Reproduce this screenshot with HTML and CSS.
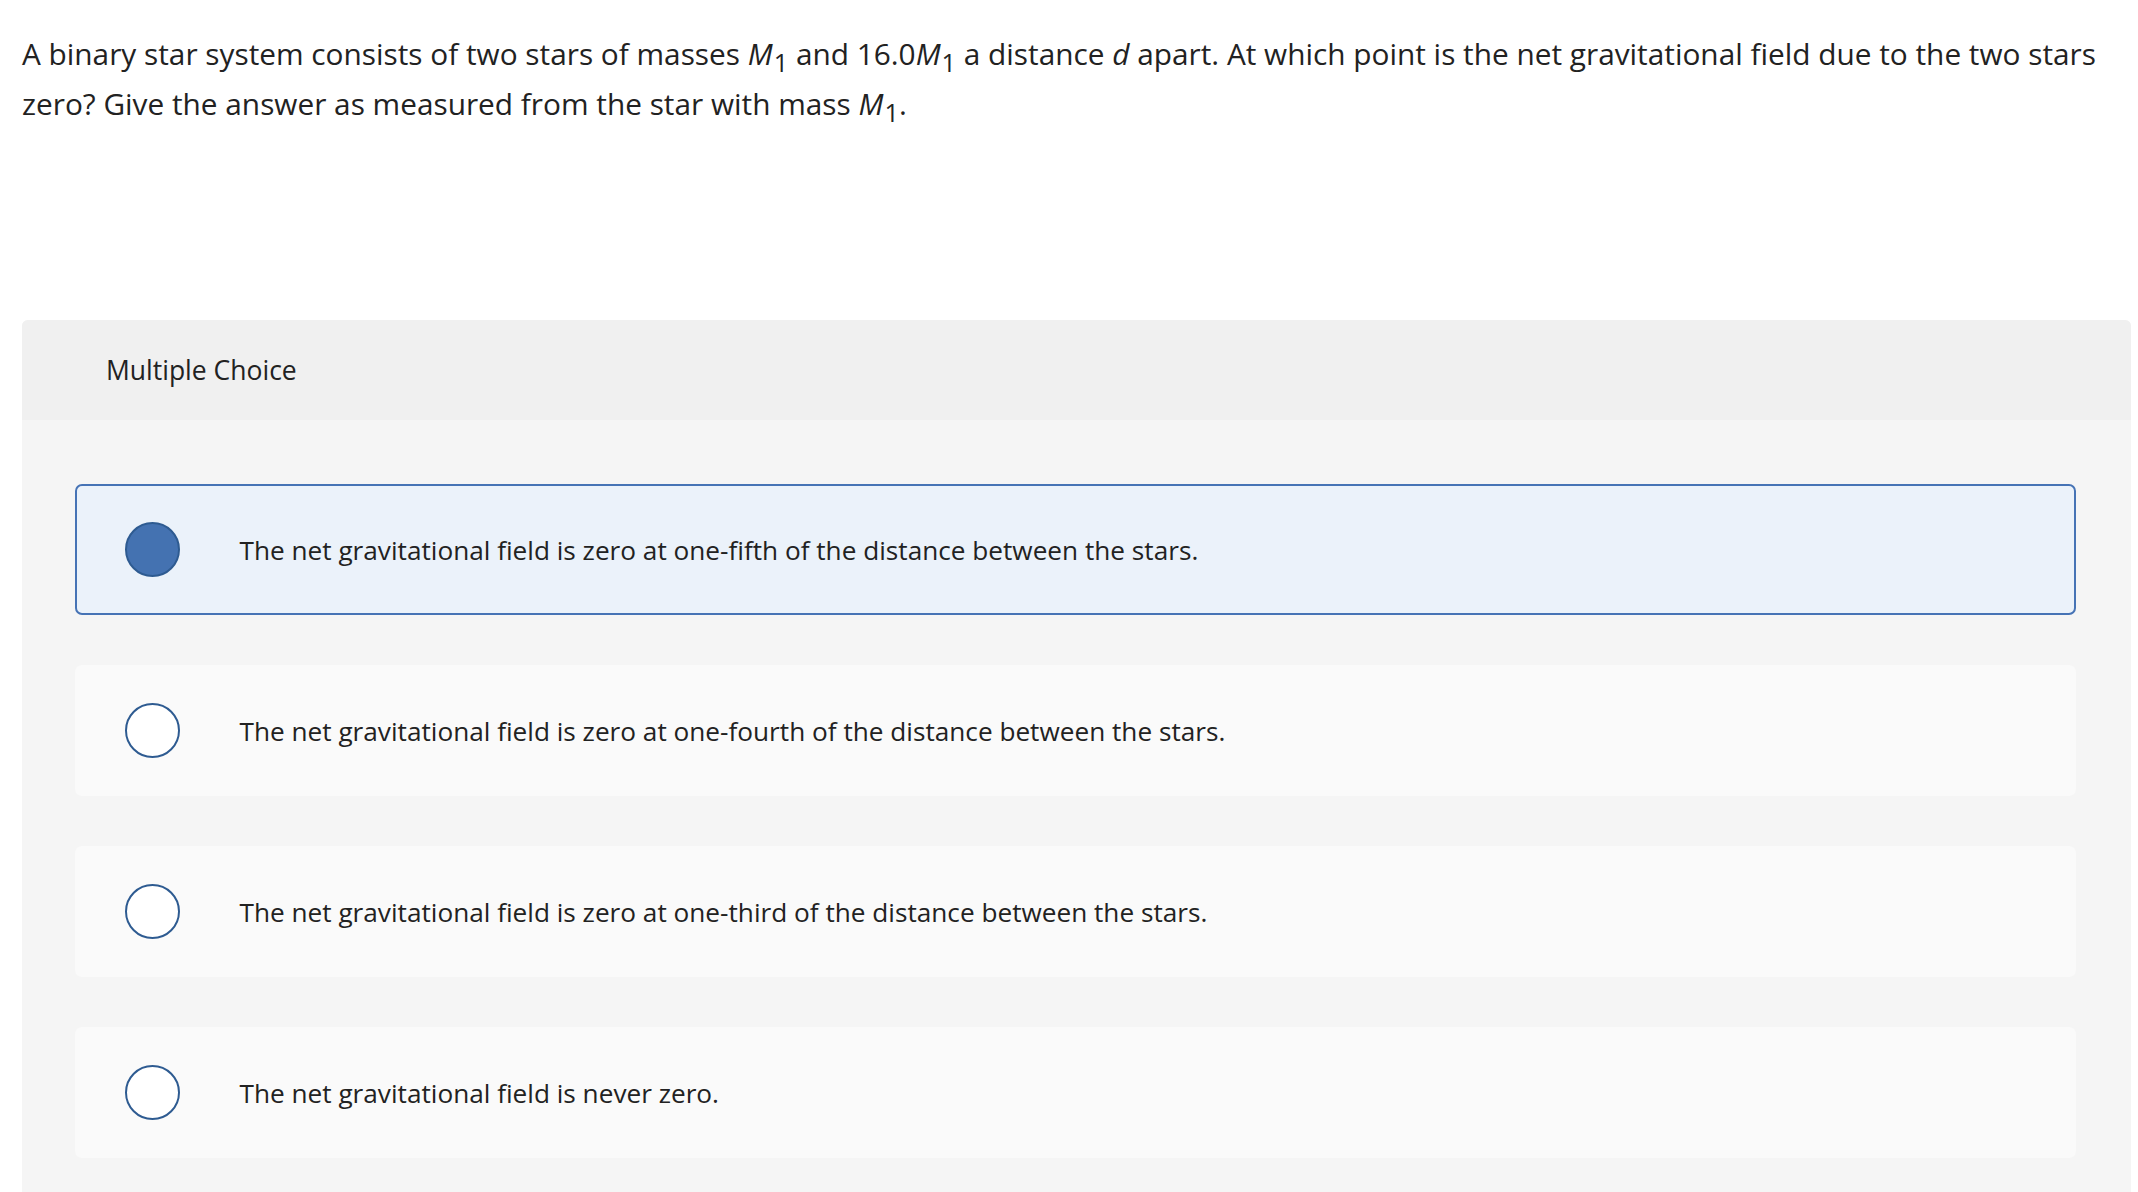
FILE: index.html
```html
<!DOCTYPE html>
<html lang="en">
<head>
<meta charset="utf-8">
<title>Multiple Choice</title>
<link rel="stylesheet" href="styles.css">
</head>
<body>
<main class="page">
  <p class="question">A binary star system consists of two stars of masses <span class="math"><i>M</i><sub>1</sub></span> and 16.0<span class="math"><i>M</i><sub>1</sub></span> a distance <i class="var">d</i> apart. At which point is the net gravitational field due to the two stars zero? Give the answer as measured from the star with mass <span class="math"><i>M</i><sub>1</sub></span>.</p>

  <section class="panel">
    <header class="panel-head">Multiple Choice</header>
    <div class="panel-body">
      <div class="option selected">
        <span class="radio"></span>
        <span class="label">The net gravitational field is zero at one-fifth of the distance between the stars.</span>
      </div>
      <div class="option">
        <span class="radio"></span>
        <span class="label">The net gravitational field is zero at one-fourth of the distance between the stars.</span>
      </div>
      <div class="option">
        <span class="radio"></span>
        <span class="label">The net gravitational field is zero at one-third of the distance between the stars.</span>
      </div>
      <div class="option">
        <span class="radio"></span>
        <span class="label">The net gravitational field is never zero.</span>
      </div>
    </div>
  </section>
</main>
</body>
</html>
```

FILE: styles.css
```css
html, body {
  margin: 0;
  padding: 0;
  background: #ffffff;
}

body {
  font-family: "Open Sans", "Lato", sans-serif;
  color: #222222;
}

.page {
  padding: 0 7px 0 22px;
}

.question {
  margin: 29px 0 0 0;
  font-size: 29.8px;
  line-height: 50px;
  max-width: 2100px;
}

.math i,
.var {
  font-style: italic;
}

.math sub {
  font-size: 0.85em;
  vertical-align: -0.28em;
  line-height: 0;
  margin-left: 1px;
}

.panel {
  margin-top: 191px;
  border-radius: 6px 6px 0 0;
  overflow: hidden;
  background: #f5f5f5;
}

.panel-head {
  height: 100px;
  display: flex;
  align-items: center;
  padding-left: 84px;
  background: #f0f0f0;
  font-size: 26.5px;
}

.panel-body {
  padding: 64px 55px 34px 53px;
  display: flex;
  flex-direction: column;
  gap: 50px;
}

.option {
  height: 131px;
  box-sizing: border-box;
  display: flex;
  align-items: center;
  padding-left: 47.5px;
  background: #fafafa;
  border: 2px solid transparent;
  border-radius: 7px;
}

.option.selected {
  background: #ebf2fa;
  border-color: #4673b5;
}

.radio {
  flex: none;
  width: 55px;
  height: 55px;
  box-sizing: border-box;
  border-radius: 50%;
  border: 2px solid #2e5b91;
  background: #ffffff;
  margin-right: 60px;
}

.option.selected .radio {
  background: #4472b1;
  border-color: #2e5b91;
}

.label {
  font-size: 26.2px;
}
```
